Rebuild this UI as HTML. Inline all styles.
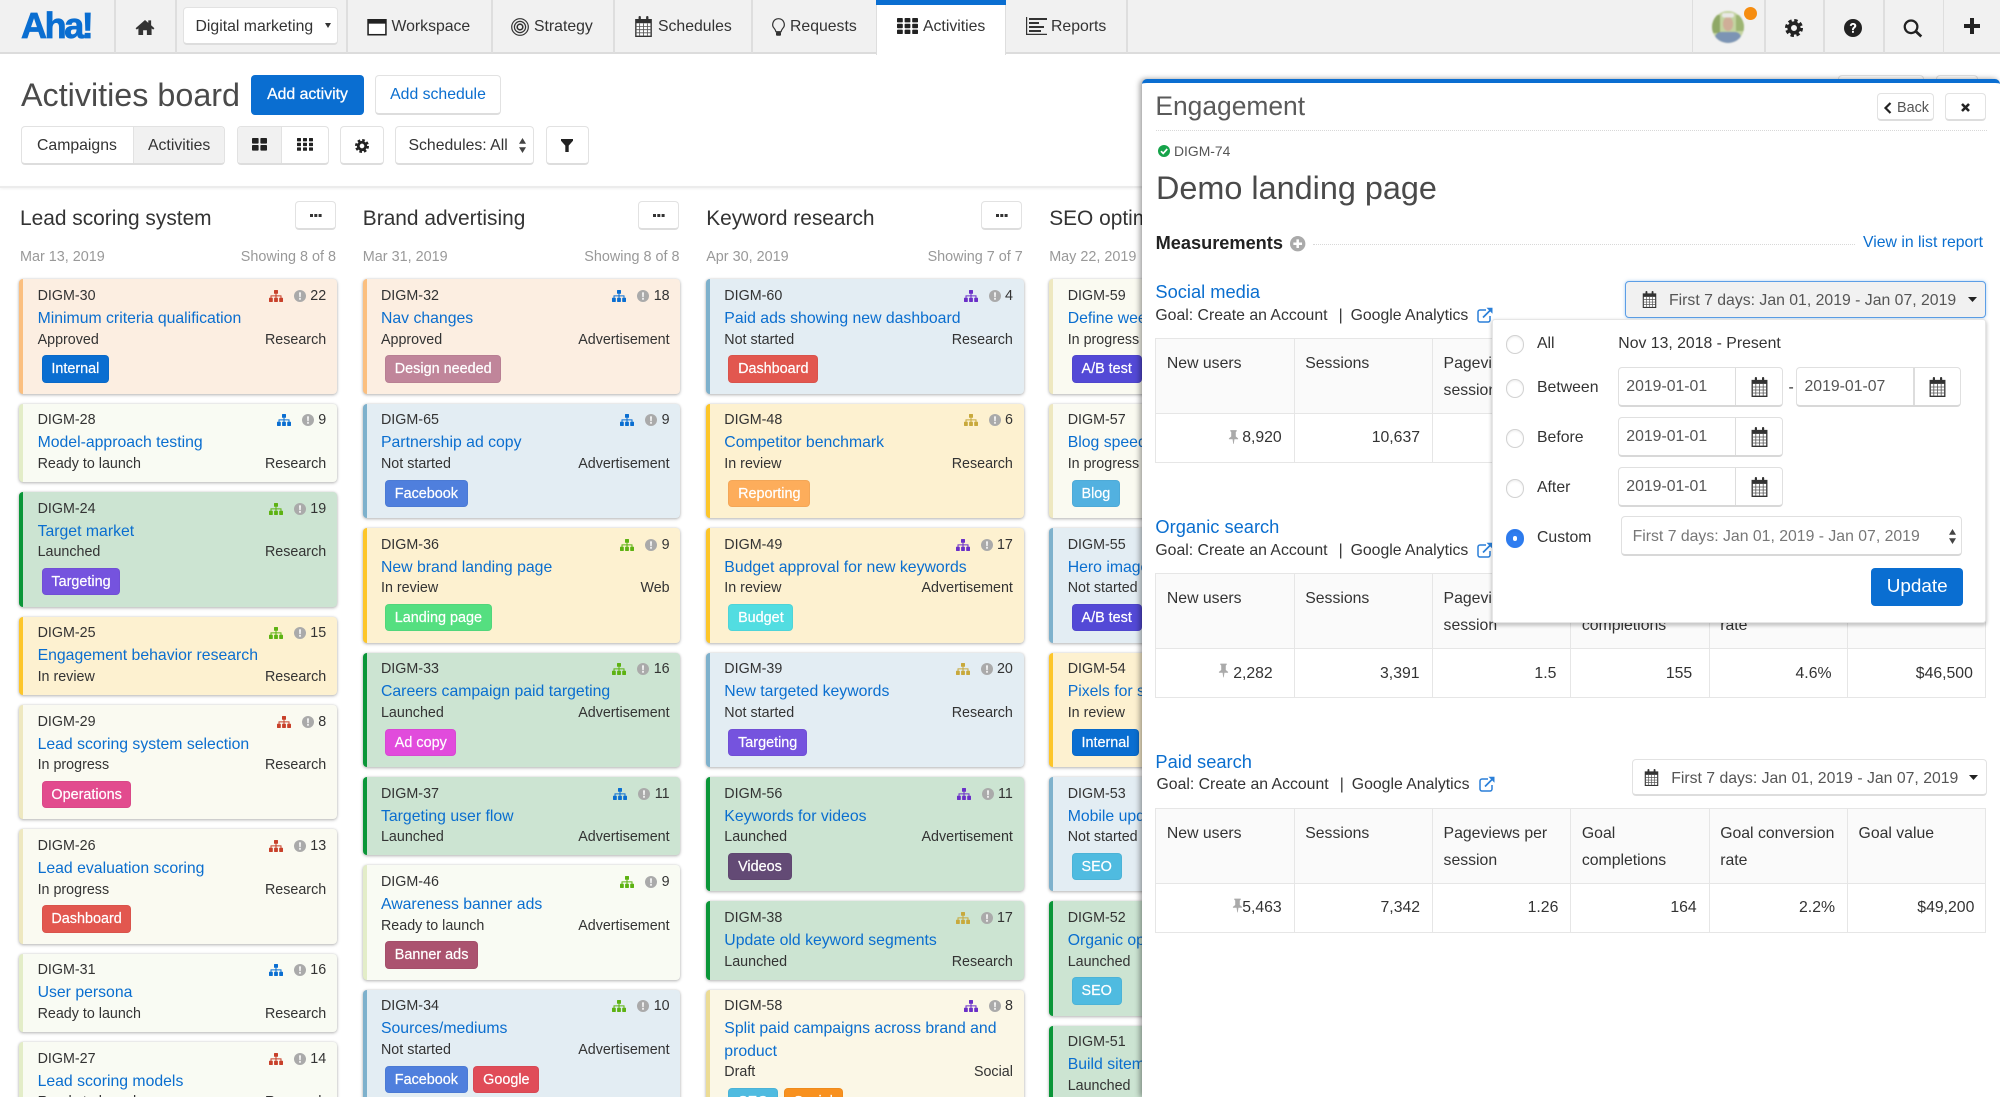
<!DOCTYPE html>
<html lang="en"><head><meta charset="utf-8"><title>Activities board</title>
<style>
*{box-sizing:border-box}
html,body{margin:0;padding:0;width:2000px;height:1097px;overflow:hidden;background:#fff}
body{position:relative;font-family:"Liberation Sans",Arial,sans-serif;color:#333;font-size:15.8px}
.a{position:absolute;white-space:nowrap;line-height:20px}
.r{position:absolute}
svg{display:block;overflow:visible}
.b{position:absolute;background:#fff;border:1px solid #e2e2e2;border-bottom:2px solid #ddd;border-radius:4px}
#hd{position:absolute;left:0;top:0;width:2000px;height:54px;background:#f1f1f1;border-bottom:2px solid #dcdcdc}
.d{position:absolute;top:0;width:1.5px;height:53px;background:#dedede}
.col{position:absolute;top:279.4px;width:317.7px;display:flex;flex-direction:column;gap:10px}
.c{position:relative;flex:none;width:100%;border-radius:4px;border-left:4.3px solid;box-shadow:0 1px 3px rgba(0,0,0,.28),0 0 2px rgba(0,0,0,.1)}
.t{height:114.4px}.s{height:78.4px}
.peach{background:#fceee1;border-color:#fbbf7f}
.lg{background:#f9fbf3;border-color:#e3edc8}
.gr{background:#cce4d2;border-color:#0a9638}
.ye{background:#fdf1d0;border-color:#fdc629}
.pa{background:#fafaf1;border-color:#eee8c0}
.bl{background:#e3edf3;border-color:#7eb1cc}
.dr{background:#fbf7e6;border-color:#ecdc95}
.c .i,.c .st,.c .ty,.c .f,.c .n,.c .g{position:absolute;white-space:nowrap}
.i{left:14.4px;top:6.7px;line-height:20px;font-size:14.3px}
.n{left:14.4px;top:28.6px;line-height:22.3px;font-size:15.8px;color:#0a6ecf;right:10px}
.st{left:14.4px;top:50.3px;line-height:20px;font-size:14.3px}
.ty{right:10.7px;top:50.3px;line-height:20px;font-size:14.3px}
.f{right:10.7px;top:6.7px;height:20px;display:flex;align-items:center;font-size:14.3px;color:#333}
.f svg.o{margin-right:11px}.f svg.e{margin-right:4.3px}
.g{left:18.5px;top:76px;display:flex;gap:5.8px}
.tg{height:27.3px;line-height:26px;padding:0 8.7px;color:#fff;font-size:14.4px;border-radius:4px;-webkit-text-stroke:.2px #fff;border:1px solid rgba(0,0,0,.04)}
table{position:absolute;border-collapse:collapse;table-layout:fixed;width:831px;background:#fff}
th,td{border:1.5px solid #e6e6e6;font-weight:400;padding:0;vertical-align:top;text-align:left}
th{background:#fafafa;height:75px;padding:12px 10.5px 0;line-height:26.5px;font-size:15.8px}
td{height:49px;text-align:right;padding:14px 12px 0;line-height:20px;font-size:15.8px;position:relative}
.lk{color:#0a6ecf}
.ttl{font-size:18.3px;color:#0a6ecf}
.radio{position:absolute;left:1505.8px;width:18.6px;height:18.6px;border-radius:50%;border:1.5px solid #d2d2d2;background:#fff;box-shadow:inset 0 1px 2px rgba(0,0,0,.08)}
.ig{position:absolute;height:39.5px;border:1.5px solid #e0e0e0;border-bottom:2px solid #d8d8d8;border-radius:4px;background:#fff}
.ig span{position:absolute;left:7.5px;top:9px;line-height:20px;font-size:15.8px;color:#555}
.ig i{position:absolute;top:0;bottom:0;width:1.5px;background:#ddd}
</style></head><body>
<svg width="0" height="0" style="position:absolute">
<symbol id="org" viewBox="0 0 14 12"><rect x="5" y="0" width="4" height="3.8" rx=".6" fill="currentColor"/><path d="M7 3.5V8M2 8V5.9H12V8" fill="none" stroke="currentColor" stroke-width="1"/><rect x="0" y="7.8" width="3.8" height="4.2" rx=".6" fill="currentColor"/><rect x="5.1" y="7.8" width="3.8" height="4.2" rx=".6" fill="currentColor"/><rect x="10.2" y="7.8" width="3.8" height="4.2" rx=".6" fill="currentColor"/></symbol>
<symbol id="al" viewBox="0 0 12 12"><circle cx="6" cy="6" r="6" fill="#aaa"/><path d="M5 2.4h2L6.7 7.2H5.3z" fill="#f4f4f4"/><rect x="5.1" y="8" width="1.8" height="1.7" fill="#f4f4f4"/></symbol>
<symbol id="cal" viewBox="0 0 16 20"><path d="M.7 3.5h14.6v15.8H.7z" fill="#fff" stroke="#333" stroke-width="1.3"/><rect x=".7" y="3.5" width="14.6" height="3.4" fill="#333"/><path d="M.7 10h14.6M.7 13h14.6M.7 16h14.6M4.3 7v12M8 7v12M11.7 7v12" stroke="#555" stroke-width=".8" fill="none"/><rect x="3.3" y="0" width="2.2" height="5" rx="1" fill="#333"/><rect x="10.5" y="0" width="2.2" height="5" rx="1" fill="#333"/></symbol>
<symbol id="ext" viewBox="0 0 16 16"><path d="M9 3H3a2 2 0 0 0-2 2v8a2 2 0 0 0 2 2h8a2 2 0 0 0 2-2V9" fill="none" stroke="#2a7fd8" stroke-width="1.5"/><path d="M6 10.5 13.5 3" stroke="#2a7fd8" stroke-width="1.7" fill="none"/><path d="M9.5 .8h6v6z" fill="#2a7fd8"/></symbol>
<symbol id="pin" viewBox="0 0 12 15"><path d="M2.5 0h7v1.2l-1 .8v5l2.5 2v1H7L6.3 15h-.6L5 10H1V9l2.5-2V2l-1-.8z" fill="#aaa"/></symbol>
<symbol id="gear" viewBox="0 0 18 18"><circle cx="9" cy="9" r="4.8" fill="none" stroke="#222" stroke-width="3.6"/><circle cx="9" cy="9" r="7.6" fill="none" stroke="#222" stroke-width="2.8" stroke-dasharray="3.4 2.57"/></symbol>
</svg>

<div id="hd"></div>
<div class="d" style="left:114px"></div><div class="d" style="left:175px"></div><div class="d" style="left:346px"></div><div class="d" style="left:491px"></div><div class="d" style="left:613px"></div><div class="d" style="left:751px"></div><div class="d" style="left:1126px"></div><div class="d" style="left:1691.6px"></div><div class="d" style="left:1764px"></div><div class="d" style="left:1823px"></div><div class="d" style="left:1883px"></div><div class="d" style="left:1942.7px"></div>

<div class="a" style="left:21px;top:6px;line-height:40px;font-size:36px;font-weight:700;color:#0a6ed1;letter-spacing:-2.4px;-webkit-text-stroke:.8px #0a6ed1">Aha!</div>
<svg class="r" style="left:135px;top:19px" width="20" height="16" viewBox="0 0 20 17"><path d="M10 1 0 9.8l1.3 1.5L3 9.9V17h5v-5h4v5h5V9.9l1.7 1.4L20 9.8 16.5 6.7V1.5h-3v2.6z" fill="#333"/></svg>
<div class="b" style="left:183px;top:7.3px;width:155px;height:38px"></div>
<div class="a" style="left:195.5px;top:16.7px">Digital marketing</div>
<svg class="r" style="left:324.5px;top:23px" width="6" height="5"><path d="M0 0h6L3 5z" fill="#333"/></svg>

<svg class="r" style="left:367px;top:18.7px" width="20" height="16.5" viewBox="0 0 20 17"><rect x=".8" y=".8" width="18.4" height="15.4" fill="#fff" stroke="#222" stroke-width="1.6"/><rect x=".8" y=".8" width="18.4" height="4" fill="#222"/></svg>
<div class="a" style="left:391.5px;top:16.7px">Workspace</div>
<svg class="r" style="left:511px;top:18px" width="18" height="18" viewBox="0 0 18 18"><circle cx="9" cy="9" r="8.3" fill="none" stroke="#333" stroke-width="1.2"/><circle cx="9" cy="9" r="5.6" fill="none" stroke="#333" stroke-width="1.2"/><circle cx="9" cy="9" r="2.8" fill="none" stroke="#333" stroke-width="1.6"/></svg>
<div class="a" style="left:534px;top:16.7px">Strategy</div>
<svg class="r" style="left:634px;top:16px" width="19" height="21"><use href="#cal"/></svg>
<div class="a" style="left:658px;top:16.7px">Schedules</div>
<svg class="r" style="left:772px;top:18px" width="13" height="18" viewBox="0 0 13 18"><path d="M6.5.7a5.8 5.8 0 0 0-4 10c.8 1 1.2 1.8 1.4 3h5.2c.2-1.2.6-2 1.4-3a5.8 5.8 0 0 0-4-10z" fill="none" stroke="#333" stroke-width="1.2"/><rect x="4" y="13.8" width="5" height="4" rx="1" fill="#333"/></svg>
<div class="a" style="left:790px;top:16.7px">Requests</div>

<div class="r" style="left:876px;top:0;width:130px;height:55px;background:#fff;border-left:1.5px solid #dedede;border-right:1.5px solid #dedede"></div>
<div class="r" style="left:876px;top:0;width:130px;height:5px;background:#0a6ed1"></div>
<svg class="r" style="left:897px;top:18px" width="21" height="16"><g fill="#222"><rect x="0" y="0" width="5.8" height="4.4" rx=".8"/><rect x="7.6" y="0" width="5.8" height="4.4" rx=".8"/><rect x="15.2" y="0" width="5.8" height="4.4" rx=".8"/><rect x="0" y="5.8" width="5.8" height="4.4" rx=".8"/><rect x="7.6" y="5.8" width="5.8" height="4.4" rx=".8"/><rect x="15.2" y="5.8" width="5.8" height="4.4" rx=".8"/><rect x="0" y="11.6" width="5.8" height="4.4" rx=".8"/><rect x="7.6" y="11.6" width="5.8" height="4.4" rx=".8"/><rect x="15.2" y="11.6" width="5.8" height="4.4" rx=".8"/></g></svg>
<div class="a" style="left:923px;top:16.7px">Activities</div>
<svg class="r" style="left:1026px;top:17px" width="21" height="18" viewBox="0 0 21 18"><path d="M.6 0v18M0 17.4h21" stroke="#333" stroke-width="1.2" fill="none"/><g fill="#333"><rect x="3" y="1" width="18" height="2"/><rect x="3" y="5" width="10" height="2"/><rect x="3" y="9" width="15" height="2"/><rect x="3" y="13" width="12" height="2"/></g></svg>
<div class="a" style="left:1051px;top:16.7px">Reports</div>

<svg class="r" style="left:1712px;top:10.7px;filter:blur(.7px)" width="32" height="32" viewBox="0 0 32 32"><defs><clipPath id="av"><circle cx="16" cy="16" r="16"/></clipPath></defs><g clip-path="url(#av)"><rect width="32" height="32" fill="#c3d3a0"/><rect x="0" y="4" width="8" height="18" fill="#8fa866"/><rect x="24" y="4" width="8" height="16" fill="#9db573"/><rect x="3" y="21" width="26" height="12" rx="6" fill="#7c94b4"/><ellipse cx="16" cy="13" rx="5" ry="7" fill="#cfae98"/><rect x="10" y="2" width="12" height="4.5" rx="2" fill="#e8e8e6"/></g></svg>
<div class="r" style="left:1744px;top:6.7px;width:13px;height:13px;border-radius:50%;background:#f68d10"></div>
<svg class="r" style="left:1785px;top:18.7px" width="18" height="18"><use href="#gear"/></svg>
<svg class="r" style="left:1844px;top:18.7px" width="18" height="18" viewBox="0 0 18 18"><circle cx="9" cy="9" r="9" fill="#222"/><path d="M5.8 6.8C6 4.9 7.4 4 9.1 4c1.9 0 3.2 1.1 3.2 2.7 0 2.3-2.5 2.4-2.5 4.3H8c0-2.9 2.2-3 2.2-4.2 0-.6-.5-1-1.2-1-.8 0-1.2.5-1.3 1.2z" fill="#fff"/><rect x="8" y="11.8" width="1.9" height="2" fill="#fff"/></svg>
<svg class="r" style="left:1903px;top:18.7px" width="20" height="18" viewBox="0 0 20 18.5"><circle cx="8" cy="8" r="6.5" fill="none" stroke="#222" stroke-width="2.3"/><path d="M12.8 12.6 18.5 18" stroke="#222" stroke-width="2.8" fill="none"/></svg>
<svg class="r" style="left:1964px;top:18px" width="16" height="16"><path d="M6 0h4v6h6v4h-6v6H6v-6H0V6h6z" fill="#222"/></svg>

<div class="a" style="left:21px;top:75px;line-height:40px;font-size:32.3px;color:#4a4a4a">Activities board</div>
<div class="r" style="left:251px;top:75px;width:113px;height:40px;background:#0a6ed1;border-radius:4px;color:#fff;text-align:center;line-height:40.5px;-webkit-text-stroke:.25px #fff">Add activity</div>
<div class="b" style="left:375px;top:75px;width:126px;height:40px;color:#0a6ecf;text-align:center;line-height:38.5px">Add schedule</div>

<div class="b" style="left:21px;top:125.7px;width:204px;height:39px"></div>
<div class="r" style="left:133px;top:126.7px;width:91px;height:36px;background:#f1f1f1;border-left:1px solid #e2e2e2;border-radius:0 3px 3px 0"></div>
<div class="a" style="left:37px;top:136px;font-size:15.8px">Campaigns</div><div class="a" style="left:148px;top:136px;font-size:15.8px">Activities</div>
<div class="b" style="left:237px;top:125.7px;width:92px;height:39px"></div>
<div class="r" style="left:238px;top:126.7px;width:44px;height:36px;background:#f1f1f1;border-right:1px solid #e2e2e2;border-radius:3px 0 0 3px"></div>
<svg class="r" style="left:252px;top:138px" width="15" height="13"><g fill="#222"><rect width="6.6" height="5.6" rx=".8"/><rect x="8.4" width="6.6" height="5.6" rx=".8"/><rect y="7" width="6.6" height="5.6" rx=".8"/><rect x="8.4" y="7" width="6.6" height="5.6" rx=".8"/></g></svg>
<svg class="r" style="left:297px;top:138px" width="16" height="13"><g fill="#222"><rect width="4" height="3.4" rx=".6"/><rect x="6" width="4" height="3.4" rx=".6"/><rect x="12" width="4" height="3.4" rx=".6"/><rect y="4.7" width="4" height="3.4" rx=".6"/><rect x="6" y="4.7" width="4" height="3.4" rx=".6"/><rect x="12" y="4.7" width="4" height="3.4" rx=".6"/><rect y="9.4" width="4" height="3.4" rx=".6"/><rect x="6" y="9.4" width="4" height="3.4" rx=".6"/><rect x="12" y="9.4" width="4" height="3.4" rx=".6"/></g></svg>
<div class="b" style="left:340px;top:125.7px;width:43.5px;height:39px"></div>
<svg class="r" style="left:355px;top:138.5px" width="14" height="14"><use href="#gear"/></svg>
<div class="b" style="left:395px;top:125.7px;width:139px;height:39px"></div>
<div class="a" style="left:408.5px;top:136px;font-size:15.8px">Schedules: All</div>
<svg class="r" style="left:519px;top:138px" width="7" height="15"><path d="M3.5 0 7 5.8H0zM3.5 15 7 9.2H0z" fill="#444"/></svg>
<div class="b" style="left:545.5px;top:125.7px;width:43px;height:39px"></div>
<svg class="r" style="left:561px;top:139px" width="12" height="13"><path d="M0 0h12v1.8L7.7 6.6V13H4.3V6.6L0 1.8z" fill="#222"/></svg>

<div class="r" style="left:0;top:186px;width:2000px;height:2px;background:#ececec;box-shadow:0 1px 2px rgba(0,0,0,.06)"></div>

<!-- column headers -->
<div class="a" style="left:20px;top:206px;line-height:25px;font-size:20.9px">Lead scoring system</div>
<div class="b" style="left:294.5px;top:201px;width:41px;height:29px"></div>
<div class="a" style="left:20px;top:246.7px;font-size:14.4px;color:#999">Mar 13, 2019</div>
<div class="a" style="left:240px;width:96px;text-align:right;top:246.7px;font-size:14.4px;color:#999">Showing 8 of 8</div>
<div class="a" style="left:362.8px;top:206px;line-height:25px;font-size:20.9px">Brand advertising</div>
<div class="b" style="left:637.5px;top:201px;width:41px;height:29px"></div>
<div class="a" style="left:362.8px;top:246.7px;font-size:14.4px;color:#999">Mar 31, 2019</div>
<div class="a" style="left:583.5px;width:96px;text-align:right;top:246.7px;font-size:14.4px;color:#999">Showing 8 of 8</div>
<div class="a" style="left:706.2px;top:206px;line-height:25px;font-size:20.9px">Keyword research</div>
<div class="b" style="left:980.8px;top:201px;width:41px;height:29px"></div>
<div class="a" style="left:706.2px;top:246.7px;font-size:14.4px;color:#999">Apr 30, 2019</div>
<div class="a" style="left:926.8px;width:96px;text-align:right;top:246.7px;font-size:14.4px;color:#999">Showing 7 of 7</div>
<div class="a" style="left:1049.2px;top:206px;line-height:25px;font-size:20.9px">SEO optimization</div>
<div class="a" style="left:1049.2px;top:246.7px;font-size:14.4px;color:#999">May 22, 2019</div>
<svg class="r" style="left:309.5px;top:213.5px" width="12" height="3"><path d="M0 0h3v3H0zM4.3 0h3v3h-3zM8.6 0h3v3h-3z" fill="#333"/></svg>
<svg class="r" style="left:652.5px;top:213.5px" width="12" height="3"><path d="M0 0h3v3H0zM4.3 0h3v3h-3zM8.6 0h3v3h-3z" fill="#333"/></svg>
<svg class="r" style="left:995.8px;top:213.5px" width="12" height="3"><path d="M0 0h3v3H0zM4.3 0h3v3h-3zM8.6 0h3v3h-3z" fill="#333"/></svg>

<!-- column 1 -->
<div class="col" style="left:19.2px">
<div class="c t peach"><div class="i">DIGM-30</div><div class="f"><svg class="o" width="14" height="12" color="#c8402a"><use href="#org"/></svg><svg class="e" width="12" height="12"><use href="#al"/></svg>22</div><div class="n">Minimum criteria qualification</div><div class="st">Approved</div><div class="ty">Research</div><div class="g"><div class="tg" style="background:#0a6ed1">Internal</div></div></div>
<div class="c s lg"><div class="i">DIGM-28</div><div class="f"><svg class="o" width="14" height="12" color="#0a6ed1"><use href="#org"/></svg><svg class="e" width="12" height="12"><use href="#al"/></svg>9</div><div class="n">Model-approach testing</div><div class="st">Ready to launch</div><div class="ty">Research</div></div>
<div class="c t gr"><div class="i">DIGM-24</div><div class="f"><svg class="o" width="14" height="12" color="#5db212"><use href="#org"/></svg><svg class="e" width="12" height="12"><use href="#al"/></svg>19</div><div class="n">Target market</div><div class="st">Launched</div><div class="ty">Research</div><div class="g"><div class="tg" style="background:#7553de">Targeting</div></div></div>
<div class="c s ye"><div class="i">DIGM-25</div><div class="f"><svg class="o" width="14" height="12" color="#5db212"><use href="#org"/></svg><svg class="e" width="12" height="12"><use href="#al"/></svg>15</div><div class="n">Engagement behavior research</div><div class="st">In review</div><div class="ty">Research</div></div>
<div class="c t pa"><div class="i">DIGM-29</div><div class="f"><svg class="o" width="14" height="12" color="#c8402a"><use href="#org"/></svg><svg class="e" width="12" height="12"><use href="#al"/></svg>8</div><div class="n">Lead scoring system selection</div><div class="st">In progress</div><div class="ty">Research</div><div class="g"><div class="tg" style="background:#e24b8e">Operations</div></div></div>
<div class="c t pa"><div class="i">DIGM-26</div><div class="f"><svg class="o" width="14" height="12" color="#c8402a"><use href="#org"/></svg><svg class="e" width="12" height="12"><use href="#al"/></svg>13</div><div class="n">Lead evaluation scoring</div><div class="st">In progress</div><div class="ty">Research</div><div class="g"><div class="tg" style="background:#e2574f">Dashboard</div></div></div>
<div class="c s lg"><div class="i">DIGM-31</div><div class="f"><svg class="o" width="14" height="12" color="#0a6ed1"><use href="#org"/></svg><svg class="e" width="12" height="12"><use href="#al"/></svg>16</div><div class="n">User persona</div><div class="st">Ready to launch</div><div class="ty">Research</div></div>
<div class="c s lg"><div class="i">DIGM-27</div><div class="f"><svg class="o" width="14" height="12" color="#c8402a"><use href="#org"/></svg><svg class="e" width="12" height="12"><use href="#al"/></svg>14</div><div class="n">Lead scoring models</div><div class="st">Ready to launch</div><div class="ty">Research</div></div>
</div>

<!-- column 2 -->
<div class="col" style="left:362.6px">
<div class="c t peach"><div class="i">DIGM-32</div><div class="f"><svg class="o" width="14" height="12" color="#0a6ed1"><use href="#org"/></svg><svg class="e" width="12" height="12"><use href="#al"/></svg>18</div><div class="n">Nav changes</div><div class="st">Approved</div><div class="ty">Advertisement</div><div class="g"><div class="tg" style="background:#c0859a">Design needed</div></div></div>
<div class="c t bl"><div class="i">DIGM-65</div><div class="f"><svg class="o" width="14" height="12" color="#0a6ed1"><use href="#org"/></svg><svg class="e" width="12" height="12"><use href="#al"/></svg>9</div><div class="n">Partnership ad copy</div><div class="st">Not started</div><div class="ty">Advertisement</div><div class="g"><div class="tg" style="background:#4f7fdd">Facebook</div></div></div>
<div class="c t ye"><div class="i">DIGM-36</div><div class="f"><svg class="o" width="14" height="12" color="#5db212"><use href="#org"/></svg><svg class="e" width="12" height="12"><use href="#al"/></svg>9</div><div class="n">New brand landing page</div><div class="st">In review</div><div class="ty">Web</div><div class="g"><div class="tg" style="background:#55df80">Landing page</div></div></div>
<div class="c t gr"><div class="i">DIGM-33</div><div class="f"><svg class="o" width="14" height="12" color="#5db212"><use href="#org"/></svg><svg class="e" width="12" height="12"><use href="#al"/></svg>16</div><div class="n">Careers campaign paid targeting</div><div class="st">Launched</div><div class="ty">Advertisement</div><div class="g"><div class="tg" style="background:#e14bdc">Ad copy</div></div></div>
<div class="c s gr"><div class="i">DIGM-37</div><div class="f"><svg class="o" width="14" height="12" color="#0a6ed1"><use href="#org"/></svg><svg class="e" width="12" height="12"><use href="#al"/></svg>11</div><div class="n">Targeting user flow</div><div class="st">Launched</div><div class="ty">Advertisement</div></div>
<div class="c t lg"><div class="i">DIGM-46</div><div class="f"><svg class="o" width="14" height="12" color="#5db212"><use href="#org"/></svg><svg class="e" width="12" height="12"><use href="#al"/></svg>9</div><div class="n">Awareness banner ads</div><div class="st">Ready to launch</div><div class="ty">Advertisement</div><div class="g"><div class="tg" style="background:#ab536f">Banner ads</div></div></div>
<div class="c t bl"><div class="i">DIGM-34</div><div class="f"><svg class="o" width="14" height="12" color="#5db212"><use href="#org"/></svg><svg class="e" width="12" height="12"><use href="#al"/></svg>10</div><div class="n">Sources/mediums</div><div class="st">Not started</div><div class="ty">Advertisement</div><div class="g"><div class="tg" style="background:#4f7fdd">Facebook</div><div class="tg" style="background:#e04c58">Google</div></div></div>
</div>

<!-- column 3 -->
<div class="col" style="left:705.9px">
<div class="c t bl"><div class="i">DIGM-60</div><div class="f"><svg class="o" width="14" height="12" color="#6a2fc8"><use href="#org"/></svg><svg class="e" width="12" height="12"><use href="#al"/></svg>4</div><div class="n">Paid ads showing new dashboard</div><div class="st">Not started</div><div class="ty">Research</div><div class="g"><div class="tg" style="background:#e2574f">Dashboard</div></div></div>
<div class="c t ye"><div class="i">DIGM-48</div><div class="f"><svg class="o" width="14" height="12" color="#c8a93c"><use href="#org"/></svg><svg class="e" width="12" height="12"><use href="#al"/></svg>6</div><div class="n">Competitor benchmark</div><div class="st">In review</div><div class="ty">Research</div><div class="g"><div class="tg" style="background:#fdad5b">Reporting</div></div></div>
<div class="c t ye"><div class="i">DIGM-49</div><div class="f"><svg class="o" width="14" height="12" color="#6a2fc8"><use href="#org"/></svg><svg class="e" width="12" height="12"><use href="#al"/></svg>17</div><div class="n">Budget approval for new keywords</div><div class="st">In review</div><div class="ty">Advertisement</div><div class="g"><div class="tg" style="background:#52dde1">Budget</div></div></div>
<div class="c t bl"><div class="i">DIGM-39</div><div class="f"><svg class="o" width="14" height="12" color="#c8a93c"><use href="#org"/></svg><svg class="e" width="12" height="12"><use href="#al"/></svg>20</div><div class="n">New targeted keywords</div><div class="st">Not started</div><div class="ty">Research</div><div class="g"><div class="tg" style="background:#7553de">Targeting</div></div></div>
<div class="c t gr"><div class="i">DIGM-56</div><div class="f"><svg class="o" width="14" height="12" color="#6a2fc8"><use href="#org"/></svg><svg class="e" width="12" height="12"><use href="#al"/></svg>11</div><div class="n">Keywords for videos</div><div class="st">Launched</div><div class="ty">Advertisement</div><div class="g"><div class="tg" style="background:#634a75">Videos</div></div></div>
<div class="c s gr"><div class="i">DIGM-38</div><div class="f"><svg class="o" width="14" height="12" color="#c8a93c"><use href="#org"/></svg><svg class="e" width="12" height="12"><use href="#al"/></svg>17</div><div class="n">Update old keyword segments</div><div class="st">Launched</div><div class="ty">Research</div></div>
<div class="c dr" style="height:150px"><div class="i">DIGM-58</div><div class="f"><svg class="o" width="14" height="12" color="#6a2fc8"><use href="#org"/></svg><svg class="e" width="12" height="12"><use href="#al"/></svg>8</div><div class="n" style="white-space:normal">Split paid campaigns across brand and product</div><div class="st" style="top:72.6px">Draft</div><div class="ty" style="top:72.6px">Social</div><div class="g" style="top:98.3px"><div class="tg" style="background:#4fbbe0">SEO</div><div class="tg" style="background:#f8911f">Social</div></div></div>
</div>

<!-- column 4 -->
<div class="col" style="left:1049.3px">
<div class="c t pa"><div class="i">DIGM-59</div><div class="n">Define weekly content</div><div class="st">In progress</div><div class="g"><div class="tg" style="background:#5349d6">A/B test</div></div></div>
<div class="c t pa"><div class="i">DIGM-57</div><div class="n">Blog speed improvements</div><div class="st">In progress</div><div class="g"><div class="tg" style="background:#52b1e0">Blog</div></div></div>
<div class="c t bl"><div class="i">DIGM-55</div><div class="n">Hero image test</div><div class="st">Not started</div><div class="g"><div class="tg" style="background:#5349d6">A/B test</div></div></div>
<div class="c t ye"><div class="i">DIGM-54</div><div class="n">Pixels for site</div><div class="st">In review</div><div class="g"><div class="tg" style="background:#0a6ed1">Internal</div></div></div>
<div class="c t bl"><div class="i">DIGM-53</div><div class="n">Mobile updates</div><div class="st">Not started</div><div class="g"><div class="tg" style="background:#4fbbe0">SEO</div></div></div>
<div class="c t gr"><div class="i">DIGM-52</div><div class="n">Organic optimization</div><div class="st">Launched</div><div class="g"><div class="tg" style="background:#4fbbe0">SEO</div></div></div>
<div class="c s gr"><div class="i">DIGM-51</div><div class="n">Build sitemap</div><div class="st">Launched</div></div>
</div>

<!-- peeking buttons behind panel -->
<div class="b" style="left:1838px;top:75px;width:85.5px;height:20px"></div>
<div class="b" style="left:1936px;top:75px;width:42px;height:20px"></div>

<!-- panel -->
<div class="r" style="left:1142px;top:79.3px;width:858px;height:1018px;background:#fff;border-top:4px solid #0a6ed1;border-radius:5px 5px 0 0;box-shadow:-2px 0 6px rgba(0,0,0,.4);z-index:10"></div>
<div class="r" style="left:0;top:0;width:2000px;height:1097px;z-index:11">
<div class="a" style="left:1155.4px;top:91px;line-height:30px;font-size:26.4px;color:#5a5a5a">Engagement</div>
<div class="r" style="left:1156px;top:130px;width:831px;border-top:1.5px dotted #d8d8d8"></div>
<div class="b" style="left:1876.5px;top:92.7px;width:57.5px;height:28.5px"></div>
<svg class="r" style="left:1884px;top:101.5px" width="8" height="12"><path d="M6.5 1 1.5 6l5 5" fill="none" stroke="#222" stroke-width="2.2"/></svg>
<div class="a" style="left:1897px;top:98px;font-size:14.4px;color:#555">Back</div>
<div class="b" style="left:1945px;top:92.7px;width:41px;height:28.5px"></div>
<svg class="r" style="left:1961px;top:103px" width="9" height="9"><path d="M1 1l7 7M8 1 1 8" stroke="#222" stroke-width="2.6"/></svg>

<svg class="r" style="left:1158px;top:145px" width="12" height="12" viewBox="0 0 12 12"><circle cx="6" cy="6" r="6" fill="#16a34a"/><path d="M3 6.2 5.2 8.4 9.2 4" fill="none" stroke="#fff" stroke-width="1.7"/></svg>
<div class="a" style="left:1174px;top:141px;font-size:13.9px;color:#555">DIGM-74</div>
<div class="a" style="left:1156px;top:168px;line-height:40px;font-size:32.4px;color:#4a4a4a">Demo landing page</div>

<div class="a" style="left:1155.6px;top:233.3px;font-size:18.2px;font-weight:700;color:#222">Measurements</div>
<svg class="r" style="left:1290px;top:235.5px" width="15.4" height="15.4" viewBox="0 0 16 16"><circle cx="8" cy="8" r="8" fill="#aaa"/><path d="M6.7 3.5h2.6v3.2h3.2v2.6H9.3v3.2H6.7V9.3H3.5V6.7h3.2z" fill="#fff"/></svg>
<div class="r" style="left:1312.5px;top:243.5px;width:542px;border-top:1.5px dotted #d8d8d8"></div>
<div class="a lk" style="left:1863px;top:233px">View in list report</div>

<!-- social -->
<div class="a ttl" style="left:1155.4px;top:282.3px">Social media</div>
<div class="a" style="left:1155.4px;top:305.5px">Goal: Create an Account</div>
<div class="a" style="left:1338.6px;top:305.5px">|</div>
<div class="a" style="left:1350.6px;top:305.5px">Google Analytics</div>
<svg class="r" style="left:1477px;top:306.5px" width="16" height="16"><use href="#ext"/></svg>
<table style="left:1155.4px;top:338.3px"><tr><th>New users</th><th>Sessions</th><th>Pageviews per session</th><th>Goal completions</th><th>Goal conversion rate</th><th>Goal value</th></tr>
<tr><td><svg class="r" style="left:72px;top:16px" width="11" height="14"><use href="#pin"/></svg>8,920</td><td>10,637</td><td></td><td></td><td></td><td></td></tr></table>

<!-- organic -->
<div class="a ttl" style="left:1155.4px;top:517.3px">Organic search</div>
<div class="a" style="left:1155.4px;top:540.5px">Goal: Create an Account</div>
<div class="a" style="left:1338.6px;top:540.5px">|</div>
<div class="a" style="left:1350.6px;top:540.5px">Google Analytics</div>
<svg class="r" style="left:1477px;top:541.5px" width="16" height="16"><use href="#ext"/></svg>
<table style="left:1155.4px;top:573.3px"><tr><th>New users</th><th>Sessions</th><th>Pageviews per session</th><th>Goal completions</th><th>Goal conversion rate</th><th>Goal value</th></tr>
<tr><td style="padding-right:21px;padding-top:14.5px"><svg class="r" style="left:62px;top:14px" width="11" height="15"><use href="#pin"/></svg>2,282</td><td style="padding-right:12.5px;padding-top:14.5px">3,391</td><td style="padding-right:14px;padding-top:14.5px">1.5</td><td style="padding-right:16.5px;padding-top:14.5px">155</td><td style="padding-right:15.5px;padding-top:14.5px">4.6%</td><td style="padding-right:12.5px;padding-top:14.5px">$46,500</td></tr></table>

<!-- paid -->
<div class="a ttl" style="left:1155.4px;top:752.3px">Paid search</div>
<div class="a" style="left:1156.5px;top:774.5px">Goal: Create an Account</div>
<div class="a" style="left:1339.8px;top:774.5px">|</div>
<div class="a" style="left:1351.8px;top:774.5px">Google Analytics</div>
<svg class="r" style="left:1479px;top:775.5px" width="16" height="16"><use href="#ext"/></svg>
<div class="b" style="left:1632.2px;top:759.3px;width:355px;height:36.5px"></div>
<svg class="r" style="left:1644.3px;top:769px" width="15" height="17"><use href="#cal"/></svg>
<div class="a" style="left:1671.2px;top:768.5px;color:#555">First 7 days: Jan 01, 2019 - Jan 07, 2019</div>
<svg class="r" style="left:1969px;top:775px" width="9" height="5"><path d="M0 0h9L4.5 5z" fill="#222"/></svg>
<table style="left:1155.4px;top:808.3px"><tr><th>New users</th><th>Sessions</th><th>Pageviews per session</th><th>Goal completions</th><th>Goal conversion rate</th><th>Goal value</th></tr>
<tr><td><svg class="r" style="left:76px;top:14px" width="11" height="15"><use href="#pin"/></svg>5,463</td><td>7,342</td><td>1.26</td><td>164</td><td>2.2%</td><td style="padding-right:11px">$49,200</td></tr></table>

<!-- active dropdown -->
<div class="r" style="left:1625.2px;top:281px;width:361px;height:36.7px;background:#f1f1f1;border:1.5px solid #5c9ee6;border-radius:4px;box-shadow:0 0 3px rgba(90,160,230,.5)"></div>
<svg class="r" style="left:1642px;top:291px" width="15" height="17"><use href="#cal"/></svg>
<div class="a" style="left:1669px;top:291.3px;color:#555">First 7 days: Jan 01, 2019 - Jan 07, 2019</div>
<svg class="r" style="left:1968px;top:297px" width="9" height="5"><path d="M0 0h9L4.5 5z" fill="#222"/></svg>

<!-- popover -->
<div class="r" style="left:1492.4px;top:319px;width:494px;height:303.7px;background:#fff;border:1px solid #e6e6e6;border-radius:3px;box-shadow:0 2px 3px 1px rgba(0,0,0,.2)"></div>
<div class="radio" style="top:335px"></div><div class="radio" style="top:379px"></div><div class="radio" style="top:429px"></div><div class="radio" style="top:479px"></div>
<div class="radio" style="top:529.4px;background:#2f7df0;border-color:#2f7df0"></div><div class="r" style="left:1512.8px;top:536.4px;width:4.6px;height:4.6px;border-radius:50%;background:#fff"></div>
<div class="a" style="left:1537px;top:334.2px">All</div>
<div class="a" style="left:1618.3px;top:334.2px">Nov 13, 2018 - Present</div>
<div class="a" style="left:1537px;top:377.9px">Between</div>
<div class="a" style="left:1537px;top:428.2px">Before</div>
<div class="a" style="left:1537px;top:478.2px">After</div>
<div class="a" style="left:1537px;top:528.2px">Custom</div>

<div class="ig" style="left:1617.8px;top:367.3px;width:165.2px"><span>2019-01-01</span><i style="left:116px"></i></div>
<svg class="r" style="left:1751px;top:377px" width="17" height="20"><use href="#cal"/></svg>
<div class="a" style="left:1788.5px;top:377.9px">-</div>
<div class="ig" style="left:1796px;top:367.3px;width:165px"><span>2019-01-07</span><i style="left:116px"></i></div>
<svg class="r" style="left:1929px;top:377px" width="17" height="20"><use href="#cal"/></svg>
<div class="ig" style="left:1617.8px;top:417.3px;width:165.2px"><span>2019-01-01</span><i style="left:116px"></i></div>
<svg class="r" style="left:1751px;top:427px" width="17" height="20"><use href="#cal"/></svg>
<div class="ig" style="left:1617.8px;top:467.3px;width:165.2px"><span>2019-01-01</span><i style="left:116px"></i></div>
<svg class="r" style="left:1751px;top:477px" width="17" height="20"><use href="#cal"/></svg>

<div class="ig" style="left:1621px;top:516.3px;width:340.7px"></div>
<div class="a" style="left:1632.6px;top:526.9px;color:#777">First 7 days: Jan 01, 2019 - Jan 07, 2019</div>
<svg class="r" style="left:1948.5px;top:528.5px" width="7" height="15"><path d="M3.5 0 7 5.8H0zM3.5 15 7 9.2H0z" fill="#444"/></svg>
<div class="r" style="left:1871px;top:567.7px;width:92.4px;height:38px;background:#0a6ed1;border-radius:4px;color:#fff;text-align:center;line-height:38px;font-size:18.9px">Update</div>
</div>
</body></html>
